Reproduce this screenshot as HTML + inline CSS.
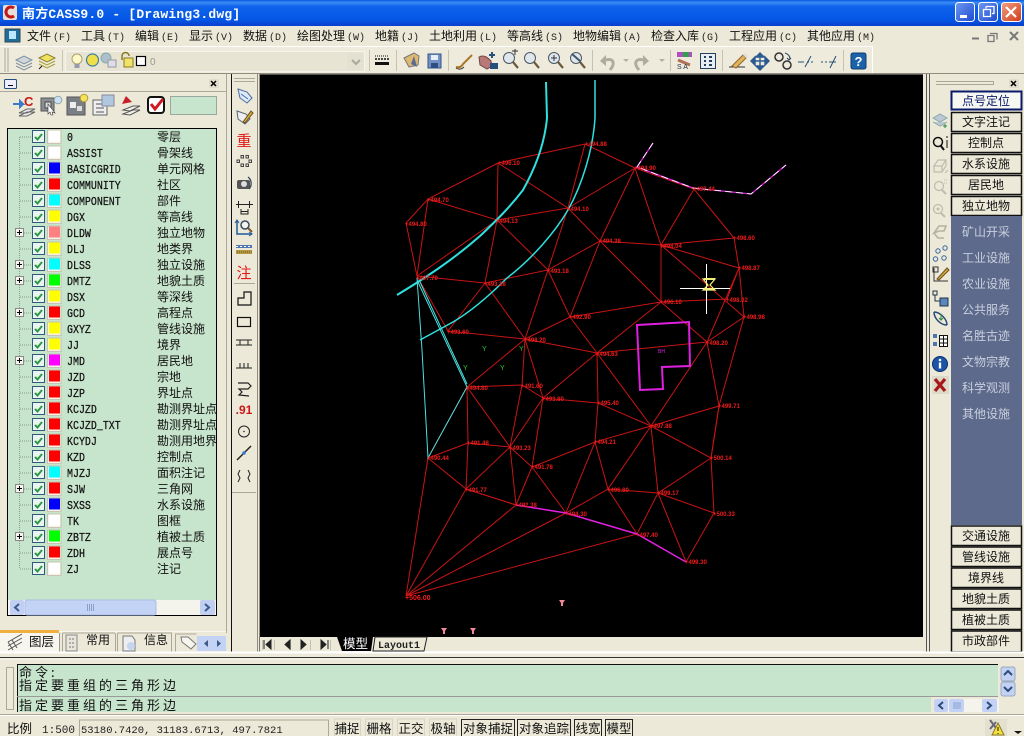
<!DOCTYPE html>
<html><head><meta charset="utf-8"><title>南方CASS9.0</title>
<style>
html,body{margin:0;padding:0;background:#ece9d8;overflow:hidden}
svg{display:block}
text{font-family:"Liberation Sans","WenQuanYi Zen Hei","Noto Sans CJK SC",sans-serif;white-space:pre}
.cj{font-family:"Liberation Mono","WenQuanYi Zen Hei","Noto Sans CJK SC",monospace;font-size:12px;fill:#111}
.mono{font-family:"Liberation Mono","Noto Sans CJK SC",monospace;font-size:12px;fill:#111;stroke:#111;stroke-width:.25}
.m{font-family:"Liberation Mono","WenQuanYi Zen Hei","Noto Sans CJK SC",monospace;font-size:12px;fill:#111}
.b{font-family:"WenQuanYi Zen Hei","Noto Sans CJK SC",sans-serif;font-size:12px;fill:#111;text-anchor:middle}
.w{font-family:"WenQuanYi Zen Hei","Noto Sans CJK SC",sans-serif;font-size:12px;fill:#c9cfdd;text-anchor:middle}
.s{font-family:"WenQuanYi Zen Hei","Noto Sans CJK SC",sans-serif;font-size:12.5px;fill:#111;text-anchor:middle}
.l{font-size:6px;font-weight:bold;fill:#f01c1c}
.cmd{font-family:"WenQuanYi Zen Hei","Noto Sans CJK SC",sans-serif;font-size:13px;letter-spacing:3px;fill:#111}
.r{stroke:#c81414;stroke-width:1;fill:none}
</style></head><body>
<svg width="1024" height="736" viewBox="0 0 1024 736" xmlns="http://www.w3.org/2000/svg">
<defs>
<linearGradient id="tb" x1="0" y1="0" x2="0" y2="1"><stop offset="0" stop-color="#0a58e0"/><stop offset=".1" stop-color="#3a8cf6"/><stop offset=".25" stop-color="#0f62ea"/><stop offset=".75" stop-color="#0457e6"/><stop offset="1" stop-color="#0a3fcc"/></linearGradient>
<linearGradient id="wb" x1="0" y1="0" x2="1" y2="1"><stop offset="0" stop-color="#6f9af0"/><stop offset="1" stop-color="#1c49cf"/></linearGradient>
<linearGradient id="wc" x1="0" y1="0" x2="1" y2="1"><stop offset="0" stop-color="#f0a080"/><stop offset="1" stop-color="#d03a18"/></linearGradient>
<clipPath id="tc"><rect x="9" y="129" width="207" height="470"/></clipPath>
<clipPath id="mc"><rect x="260" y="75" width="663" height="562"/></clipPath>
<g id="c"><rect x="32.5" y="-6.5" width="12" height="12" fill="#eaf5ef" stroke="#2c5c7c"/><path d="M35 0l2.5 2.5 4.5-5.5" fill="none" stroke="#2f9a45" stroke-width="2"/><rect x="47.5" y="-7" width="13.5" height="13.5" fill="#f4f2ea" stroke="#c9c3b0"/></g>
<g id="pl"><rect x="15.5" y="-4.5" width="8" height="8" fill="#f5f4ee" stroke="#8a8a8a"/><path d="M17 -.5h5M19.500 -3v5" stroke="#000"/></g>
</defs>

<!-- title bar -->
<rect width="1024" height="26" fill="url(#tb)"/>
<rect x="3" y="5" width="14" height="15" rx="2" fill="#e8e0d8"/><path d="M14 8a5 5 0 1 0 0 8" fill="none" stroke="#c01818" stroke-width="3"/>
<text x="22" y="18" style="font-family:'Liberation Mono','WenQuanYi Zen Hei','Noto Sans CJK SC',monospace;font-size:13px;font-weight:bold;fill:#fff;letter-spacing:.2px">南方CASS9.0 - [Drawing3.dwg]</text>
<rect x="955.500" y="2.500" width="19" height="19" rx="3" fill="url(#wb)" stroke="#fff"/><rect x="960" y="15" width="7" height="3" fill="#fff"/>
<rect x="978.500" y="2.500" width="19" height="19" rx="3" fill="url(#wb)" stroke="#fff"/><path d="M986 6.500h8v7h-2M986 6.500v2M983.500 9.500h7v7h-7z" fill="none" stroke="#fff" stroke-width="1.300"/>
<rect x="1001.500" y="2.500" width="20" height="19" rx="3" fill="url(#wc)" stroke="#fff"/><path d="M1006 7l10 10M1016 7l-10 10" stroke="#fff" stroke-width="2.200"/>

<!-- menu -->
<rect y="26" width="1024" height="20" fill="#ece9d8"/>
<rect x="5" y="29" width="15" height="13" fill="#1d6f9a" stroke="#345"/><rect x="9" y="31" width="7" height="8" fill="#bfe8ff"/>
<text class="m" y="40"><tspan x="27">文件</tspan><tspan x="81">工具</tspan><tspan x="135">编辑</tspan><tspan x="189">显示</tspan><tspan x="243">数据</tspan><tspan x="297">绘图处理</tspan><tspan x="375">地籍</tspan><tspan x="429">土地利用</tspan><tspan x="507">等高线</tspan><tspan x="573">地物编辑</tspan><tspan x="651">检查入库</tspan><tspan x="729">工程应用</tspan><tspan x="807">其他应用</tspan></text>
<text y="40" style="font-family:'Liberation Mono',monospace;font-size:10px;fill:#222"><tspan x="53">(F)</tspan><tspan x="107">(T)</tspan><tspan x="161">(E)</tspan><tspan x="215">(V)</tspan><tspan x="269">(D)</tspan><tspan x="347">(W)</tspan><tspan x="401">(J)</tspan><tspan x="479">(L)</tspan><tspan x="545">(S)</tspan><tspan x="623">(A)</tspan><tspan x="701">(G)</tspan><tspan x="779">(C)</tspan><tspan x="857">(M)</tspan></text>
<path d="M972 38.500h7" stroke="#777" stroke-width="2"/><path d="M990 33.500h7v6M988 35.500h6v6h-6z" fill="none" stroke="#777" stroke-width="1.300"/><path d="M1010 32l8 8M1018 32l-8 8" stroke="#777" stroke-width="2"/>

<!-- toolbar -->
<rect y="46" width="1024" height="28" fill="#ece9d8"/>
<rect y="46" width="873" height="27" fill="#eeebdc"/>
<path d="M0 46.500h873M872.500 46v27" stroke="#fff"/>
<path d="M0 73.500h1024" stroke="#8f8c7e"/>
<path d="M5 48v24M8 48v24" stroke="#aca899" stroke-width="1"/>
<g fill="none" stroke="#7f8f9f"><path d="M16 60l8-4 8 4-8 4z" fill="#cfd6dc"/><path d="M16 63l8 4 8-4M16 66l8 4 8-4"/></g>
<g fill="none" stroke="#8a8030"><path d="M39 58l8-4 8 4-8 4z" fill="#f0e25c"/><path d="M39 61l8 4 8-4M39 64l8 4 8-4" stroke="#a89d30"/></g><path d="M39 69l3-3" stroke="#111"/>
<path d="M62.500 50v21" stroke="#c9c6b4"/>
<rect x="65.500" y="51.500" width="299" height="20" fill="#e7e4d3" stroke="#f5f3ea"/>
<circle cx="77" cy="59" r="5" fill="#fff9c8" stroke="#aaa070"/><rect x="74.500" y="64" width="5" height="4" fill="#99a"/>
<circle cx="92.500" cy="60" r="6" fill="#efe04a" stroke="#3d7fa0" stroke-width="1.200"/>
<circle cx="106" cy="58" r="5" fill="#aebecc" stroke="#8aa"/><rect x="108" y="60" width="8" height="7" fill="#dde" stroke="#999"/>
<path d="M122 60v-4a3.500 3.500 0 0 1 7 0" fill="none" stroke="#8a7a20" stroke-width="1.500"/><rect x="124" y="58" width="9" height="9" fill="#efe36a" stroke="#8a7a20"/>
<rect x="136.500" y="56.500" width="9" height="9" fill="#fff" stroke="#000" stroke-width="1.200"/>
<text x="150" y="65" style="font-size:10px;fill:#9a9888">0</text>
<rect x="347" y="53" width="17" height="17" fill="#e3e1d2"/><path d="M352 60l4 4 4-4" fill="none" stroke="#a9a89a" stroke-width="2"/>
<path d="M369.500 50v21M396.500 50v21M448.500 50v21M592.500 50v21M670.500 50v21M722.500 50v21M843.500 50v21" stroke="#c5c2b0"/>
<path d="M375 56h14" stroke="#111" stroke-dasharray="1 1" stroke-width="1"/><path d="M375 59h14" stroke="#111" stroke-width="1.500" stroke-dasharray="2 1"/><path d="M375 63.500h14" stroke="#111" stroke-width="3"/>
<path d="M404 58l10-5 5 3-1 9-9 2z" fill="#dcb870" stroke="#777"/><path d="M414 56l-3 8 6 3z" fill="#5a6d90"/>
<rect x="428" y="54" width="13" height="14" fill="#7391c5" stroke="#33568a"/><rect x="431" y="55" width="7" height="5" fill="#e8eef8"/><rect x="431" y="63" width="7" height="5" fill="#2f4f80"/>
<path d="M456 67c4 1 6-1 7-3l9-9" fill="none" stroke="#a87828" stroke-width="2"/><path d="M456 68c3 2 6 1 8-1" fill="none" stroke="#333"/>
<path d="M479 57c5-3 9 1 12 4l1 5-5 3-7-4z" fill="#b87a78" stroke="#744"/><path d="M492 52v6M489 55h6" stroke="#24507a" stroke-width="2"/><rect x="490" y="63" width="8" height="6" fill="#24507a"/>
<g fill="#dfe6ec" stroke="#4c5866"><circle cx="509" cy="58" r="5.500"/><circle cx="530" cy="58" r="5.500"/><circle cx="554" cy="58" r="5.500"/><circle cx="576" cy="58" r="5.500"/></g>
<path d="M513 62l5 6M534 62l5 6M558 62l5 6M580 62l5 6" stroke="#6a5a3a" stroke-width="2.200"/>
<path d="M512 51h6M515 49v6" stroke="#333"/><path d="M551 58h6M554 55v6" stroke="#334"/><path d="M572 54l8 7" stroke="#456" stroke-width="2"/>
<path d="M606 60C613 58 616 63 610 70" fill="none" stroke="#aeac9e" stroke-width="3"/><path d="M600 61l6-6v11z" fill="#aeac9e"/><path d="M623 59h6l-3 3z" fill="#b2b0a2"/>
<path d="M643 60C636 58 633 63 639 70" fill="none" stroke="#aeac9e" stroke-width="3"/><path d="M649 61l-6-6v11z" fill="#aeac9e"/><path d="M659 59h6l-3 3z" fill="#b2b0a2"/>
<rect x="677" y="52" width="15" height="5" fill="#b050c0"/><rect x="683" y="52" width="6" height="5" fill="#30a050"/><path d="M678 60l12 5" stroke="#b0705a" stroke-width="3"/><text x="677" y="69" style="font-size:7px;fill:#234">S A</text>
<rect x="700.500" y="53.500" width="15" height="15" fill="#e9edf2" stroke="#24405f"/><path d="M704 57h2M709 57h3M704 61h2M709 61h3M704 65h2M709 65h3" stroke="#24405f" stroke-width="2"/>
<path d="M729 67h16" stroke="#333"/><path d="M732 66l11-11 3 3-10 10z" fill="#e7b15c" stroke="#8a6a2c"/><path d="M743 55l2-2 3 3-2 2z" fill="#ddd"/>
<path d="M760 53l4 4h-8zM760 70l-4-4h8zM751 61l4-4v8zM769 61l-4-4v8zM755 61h10M760 56v10" fill="#2c5b92" stroke="#2c5b92" stroke-width="1.400"/>
<circle cx="779" cy="57" r="4" fill="none" stroke="#333" stroke-width="1.500"/><circle cx="787" cy="65" r="4" fill="none" stroke="#333" stroke-width="1.500"/><path d="M785 53c3 1 5 3 5 6M791 58l-2 2-2-2" fill="none" stroke="#246"/>
<path d="M798 62h6M807 62h2M811 62h2M805 67l6-11" stroke="#27507a"/><path d="M821 62h2M825 62h2M829 62h7M830 68l6-12" stroke="#27507a"/>
<rect x="851" y="53" width="15" height="16" rx="2" fill="#1c62a8" stroke="#0f3c70"/><text x="858.500" y="66" style="font-size:13px;font-weight:bold;fill:#fff;text-anchor:middle">?</text>

<!-- left panel -->
<rect y="74" width="231" height="578" fill="#ece9d8"/>
<path d="M226.500 74v559" stroke="#aca899"/><path d="M231.500 74v578" stroke="#111"/><path d="M0 91.500h226" stroke="#aca899"/>
<rect x="4.500" y="79.500" width="12" height="9" rx="1" fill="#eef" stroke="#24507a"/><path d="M8 85.500h5" stroke="#000"/>
<rect x="209" y="79" width="10" height="9" fill="#e0ddcd"/><path d="M211 81l5 5M216 81l-5 5" stroke="#000" stroke-width="1.500"/>
<path d="M13 104h10l-3-3v6l3-3" stroke="#3a7ac8" stroke-width="2" fill="none"/><text x="24" y="106" style="font-size:13px;font-weight:bold;fill:#c81818">C</text><path d="M19 113l8-4h8l-8 4z M19 116l8-4h8l-8 4z" fill="#eee" stroke="#666"/>
<rect x="41" y="98" width="13" height="13" fill="#8a8f96" stroke="#555"/><rect x="45" y="102" width="6" height="6" fill="#ddd" stroke="#444"/><path d="M48 104l7 9-3-1 1 3-2 0-1-3-2 2z" fill="#fff" stroke="#333" stroke-width=".6"/><circle cx="58" cy="100" r="3.800" fill="#cfe0f6" stroke="#8aa"/>
<rect x="67" y="97" width="18" height="18" fill="#7a7f86" stroke="#555"/><rect x="70" y="102" width="6" height="6" fill="#eee"/><rect x="77" y="106" width="5" height="5" fill="#ddd"/><circle cx="84" cy="98" r="3.800" fill="#f2e35a" stroke="#b09a30"/>
<rect x="93" y="100" width="14" height="15" fill="#eee" stroke="#666"/><path d="M96 104h8M96 108h8M96 112h8" stroke="#555"/><rect x="102" y="95" width="12" height="11" fill="#b0c8df" stroke="#889"/>
<path d="M122 104l4-8 6 6z" fill="#c8202a"/><path d="M123 110l10-4h7l-10 5zM123 114l10-4h7l-10 5z" fill="#f2f2ea" stroke="#555"/>
<rect x="148" y="97" width="16" height="16" rx="3" fill="#fff" stroke="#111" stroke-width="2"/><path d="M151 104l4 5 8-10" fill="none" stroke="#d01822" stroke-width="3"/>
<rect x="170.500" y="96.500" width="46" height="18" fill="#c7e4cc" stroke="#9aa89e"/>

<!-- tree -->
<rect x="7.500" y="128.500" width="209" height="487" fill="#c7e4cc" stroke="#000"/>
<path d="M19.500 137v432" stroke="#8e9c90" stroke-dasharray="1 1"/>
<g stroke="#8e9c90" stroke-dasharray="1 1"><path d="M20 137h12M20 153h12M20 169h12M20 185h12M20 201h12M20 217h12M20 233h12M20 249h12M20 265h12M20 281h12M20 297h12M20 313h12M20 329h12M20 345h12M20 361h12M20 377h12M20 393h12M20 409h12M20 425h12M20 441h12M20 457h12M20 473h12M20 489h12M20 505h12M20 521h12M20 537h12M20 553h12M20 569h12"/></g>
<use href="#pl" y="233"/><use href="#pl" y="265"/><use href="#pl" y="281"/><use href="#pl" y="313"/><use href="#pl" y="361"/><use href="#pl" y="489"/><use href="#pl" y="537"/>
<use href="#c" y="137"/><use href="#c" y="153"/><use href="#c" y="169"/><use href="#c" y="185"/><use href="#c" y="201"/><use href="#c" y="217"/><use href="#c" y="233"/><use href="#c" y="249"/><use href="#c" y="265"/><use href="#c" y="281"/><use href="#c" y="297"/><use href="#c" y="313"/><use href="#c" y="329"/><use href="#c" y="345"/><use href="#c" y="361"/><use href="#c" y="377"/><use href="#c" y="393"/><use href="#c" y="409"/><use href="#c" y="425"/><use href="#c" y="441"/><use href="#c" y="457"/><use href="#c" y="473"/><use href="#c" y="489"/><use href="#c" y="505"/><use href="#c" y="521"/><use href="#c" y="537"/><use href="#c" y="553"/><use href="#c" y="569"/>
<g>
<rect x="49" y="130.500" width="11" height="11" fill="#fff"/><rect x="49" y="146.500" width="11" height="11" fill="#fff"/><rect x="49" y="162.500" width="11" height="11" fill="#0000ff"/><rect x="49" y="178.500" width="11" height="11" fill="#ff0000"/><rect x="49" y="194.500" width="11" height="11" fill="#00ffff"/><rect x="49" y="210.500" width="11" height="11" fill="#ffff00"/><rect x="49" y="226.500" width="11" height="11" fill="#ff8080"/><rect x="49" y="242.500" width="11" height="11" fill="#ffff00"/><rect x="49" y="258.500" width="11" height="11" fill="#00ffff"/><rect x="49" y="274.500" width="11" height="11" fill="#00ff00"/><rect x="49" y="290.500" width="11" height="11" fill="#ffff00"/><rect x="49" y="306.500" width="11" height="11" fill="#ff0000"/><rect x="49" y="322.500" width="11" height="11" fill="#ffff00"/><rect x="49" y="338.500" width="11" height="11" fill="#ffff00"/><rect x="49" y="354.500" width="11" height="11" fill="#ff00ff"/><rect x="49" y="370.500" width="11" height="11" fill="#ff0000"/><rect x="49" y="386.500" width="11" height="11" fill="#ff0000"/><rect x="49" y="402.500" width="11" height="11" fill="#ff0000"/><rect x="49" y="418.500" width="11" height="11" fill="#ff0000"/><rect x="49" y="434.500" width="11" height="11" fill="#ff0000"/><rect x="49" y="450.500" width="11" height="11" fill="#ff0000"/><rect x="49" y="466.500" width="11" height="11" fill="#00ffff"/><rect x="49" y="482.500" width="11" height="11" fill="#ff0000"/><rect x="49" y="498.500" width="11" height="11" fill="#0000ff"/><rect x="49" y="514.500" width="11" height="11" fill="#fff"/><rect x="49" y="530.500" width="11" height="11" fill="#00ff00"/><rect x="49" y="546.500" width="11" height="11" fill="#ff0000"/><rect x="49" y="562.500" width="11" height="11" fill="#fff"/>
</g>
<g clip-path="url(#tc)">
<g transform="translate(67,0) scale(.83,1)"><text class="mono"><tspan x="0" y="141">0</tspan><tspan x="0" y="157">ASSIST</tspan><tspan x="0" y="173">BASICGRID</tspan><tspan x="0" y="189">COMMUNITY</tspan><tspan x="0" y="205">COMPONENT</tspan><tspan x="0" y="221">DGX</tspan><tspan x="0" y="237">DLDW</tspan><tspan x="0" y="253">DLJ</tspan><tspan x="0" y="269">DLSS</tspan><tspan x="0" y="285">DMTZ</tspan><tspan x="0" y="301">DSX</tspan><tspan x="0" y="317">GCD</tspan><tspan x="0" y="333">GXYZ</tspan><tspan x="0" y="349">JJ</tspan><tspan x="0" y="365">JMD</tspan><tspan x="0" y="381">JZD</tspan><tspan x="0" y="397">JZP</tspan><tspan x="0" y="413">KCJZD</tspan><tspan x="0" y="429">KCJZD_TXT</tspan><tspan x="0" y="445">KCYDJ</tspan><tspan x="0" y="461">KZD</tspan><tspan x="0" y="477">MJZJ</tspan><tspan x="0" y="493">SJW</tspan><tspan x="0" y="509">SXSS</tspan><tspan x="0" y="525">TK</tspan><tspan x="0" y="541">ZBTZ</tspan><tspan x="0" y="557">ZDH</tspan><tspan x="0" y="573">ZJ</tspan></text></g>
<text class="cj"><tspan x="157" y="141">零层</tspan><tspan x="157" y="157">骨架线</tspan><tspan x="157" y="173">单元网格</tspan><tspan x="157" y="189">社区</tspan><tspan x="157" y="205">部件</tspan><tspan x="157" y="221">等高线</tspan><tspan x="157" y="237">独立地物</tspan><tspan x="157" y="253">地类界</tspan><tspan x="157" y="269">独立设施</tspan><tspan x="157" y="285">地貌土质</tspan><tspan x="157" y="301">等深线</tspan><tspan x="157" y="317">高程点</tspan><tspan x="157" y="333">管线设施</tspan><tspan x="157" y="349">境界</tspan><tspan x="157" y="365">居民地</tspan><tspan x="157" y="381">宗地</tspan><tspan x="157" y="397">界址点</tspan><tspan x="157" y="413">勘测界址点</tspan><tspan x="157" y="429">勘测界址点</tspan><tspan x="157" y="445">勘测用地界</tspan><tspan x="157" y="461">控制点</tspan><tspan x="157" y="477">面积注记</tspan><tspan x="157" y="493">三角网</tspan><tspan x="157" y="509">水系设施</tspan><tspan x="157" y="525">图框</tspan><tspan x="157" y="541">植被土质</tspan><tspan x="157" y="557">展点号</tspan><tspan x="157" y="573">注记</tspan></text>
</g>
<!-- tree scrollbar -->
<rect x="8" y="600" width="208" height="15" fill="#f4f3ec"/>
<rect x="10" y="600" width="14" height="15" rx="2" fill="#c0cff2"/><path d="M19 604l-4 3.500 4 3.500" fill="none" stroke="#3c5a8a" stroke-width="2"/>
<rect x="25" y="600" width="131" height="15" rx="2" fill="#c3d3f5" stroke="#a8bce6"/><path d="M87.500 604v7M89.500 604v7M91.500 604v7M93.500 604v7" stroke="#8aa0cc"/>
<rect x="200" y="600" width="15" height="15" rx="2" fill="#c0cff2"/><path d="M205 604l4 3.500-4 3.500" fill="none" stroke="#3c5a8a" stroke-width="2"/>

<!-- panel tabs -->
<path d="M0 631.500h226" stroke="#f8f7f0"/>
<rect x="0" y="631" width="59" height="21" fill="#f7f6ee"/><rect x="0" y="630" width="59" height="3" fill="#f0b040"/><path d="M59.500 633v19" stroke="#999"/>
<path d="M8 650l14-8M8 646l14-8M8 642l14-8M8 642l5 8M12 640l5 8" stroke="#555" fill="none"/>
<text class="cj" x="29" y="646" style="font-size:12.500px">图层</text>
<path d="M62.500 652v-18q0-1 1-1h50q2 0 2 2v17M117.500 652v-18q0-1 1-1h53v19" fill="none" stroke="#aca899"/>
<rect x="66" y="635" width="11" height="16" fill="#e8e6da" stroke="#888"/><path d="M69 639h5M69 643h5M69 647h5" stroke="#777" stroke-dasharray="2 1"/>
<text class="cj" x="86" y="644">常用</text>
<path d="M123 636h9l3 4v11h-12z" fill="#eee" stroke="#777"/><circle cx="131" cy="646" r="4" fill="#c6d4ee"/>
<text class="cj" x="144" y="644">信息</text>
<path d="M175.500 652v-18h21" fill="none" stroke="#aca899"/>
<path d="M181 637l7 0 8 7-5 5-9-7z" fill="#f6f5ee" stroke="#777"/>
<rect x="197" y="636" width="29" height="15" fill="#c4d2f3"/><path d="M208 640l-4 3.500 4 3.500z" fill="#3c5a8a"/><path d="M217 640l4 3.500-4 3.500z" fill="#3c5a8a"/>

<!-- left tool strip -->
<rect x="232" y="74" width="24" height="419" fill="#ece9d8"/>
<path d="M234 78.500h21M234 81.500h21M256.500 74v419M232 492.500h25" stroke="#aca899"/>
<rect x="256" y="74" width="4" height="564" fill="#ece9d8"/><path d="M257.500 74v578M259.500 74v578" stroke="#8f8c7e"/>
<path d="M238 89l9 3 5 6-5 5-7-5z" fill="#dfe9f6" stroke="#4c6e9c"/><path d="M241 94l7 5" stroke="#3a74b8"/>
<path d="M237 111l9 3 4 5-5 5-7-5z" fill="#eee" stroke="#567"/><path d="M243 122l8-11 2 2-8 10z" fill="#d8a83c" stroke="#6a5020"/>
<text x="244" y="146" style="font-family:'WenQuanYi Zen Hei','Noto Sans CJK SC',sans-serif;font-size:15px;fill:#e01818;text-anchor:middle">重</text>
<g fill="none" stroke="#444"><rect x="241" y="155.500" width="2.500" height="2.500"/><rect x="246" y="155.500" width="2.500" height="2.500"/><rect x="237" y="160" width="2.500" height="2.500"/><rect x="249" y="160" width="2.500" height="2.500"/><rect x="241" y="164" width="2.500" height="2.500"/><rect x="246" y="164" width="2.500" height="2.500"/></g>
<rect x="237" y="180" width="13" height="9" rx="2" fill="#555"/><circle cx="244" cy="184" r="3" fill="#ddd"/><path d="M248 177c4 3 4 9 1 12" fill="none" stroke="#345" stroke-width="1.300"/>
<path d="M236 204.500h17M238.500 201v7M249.500 201v7M241 209v5h7v-5M241 211.500h7" fill="none" stroke="#222"/>
<path d="M237 220v14h15" fill="none" stroke="#1f5a9a" stroke-width="1.500"/><path d="M235 223l2-3 2 3M249 232l3 2-3 2" stroke="#1f5a9a" fill="none"/><circle cx="245" cy="225" r="4" fill="#f5f4ea" stroke="#3a4b63" stroke-width="1.500"/><path d="M248 228l4 4" stroke="#7a5a2c" stroke-width="2"/>
<rect x="236" y="245" width="16" height="3" fill="#2c5aa6" opacity=".8"/><path d="M236 246.500h16" stroke="#fff" stroke-dasharray="2 2"/><rect x="236" y="250" width="16" height="4" fill="#b89a3c"/><path d="M237 252h15" stroke="#554" stroke-dasharray="1 1"/>
<text x="244" y="278" style="font-family:'WenQuanYi Zen Hei','Noto Sans CJK SC',sans-serif;font-size:15px;fill:#e01818;text-anchor:middle">注</text>
<path d="M234 283.500h21" stroke="#aca899"/>
<path d="M238 305v-7h6v-6h7v13z" fill="none" stroke="#111" stroke-width="1.200"/>
<rect x="237.500" y="317.500" width="13" height="9" fill="none" stroke="#111" stroke-width="1.200"/>
<path d="M236 340h16M236 345h16M240 340v5M248 340v5" fill="none" stroke="#222"/>
<path d="M236 368h16M240 363v5M248 363v5M244 363v5" fill="none" stroke="#222"/>
<path d="M238 383h10l3 3-3 3h-9l3 3-3 3 10 1" fill="none" stroke="#222" stroke-width="1.200"/>
<text x="244" y="414" style="font-size:12px;font-weight:bold;fill:#c81818;text-anchor:middle">.91</text>
<circle cx="244" cy="431.500" r="5.500" fill="none" stroke="#222"/><circle cx="244" cy="431.500" r=".8" fill="#222"/>
<path d="M237 460l14-14" stroke="#222" stroke-width="1.500"/><circle cx="244" cy="453" r="1.800" fill="#3a7ac8"/>
<path d="M240 470l-2 4 2 4-2 4M248 470l2 4-2 4 2 4" fill="none" stroke="#222"/>

<!-- canvas -->
<rect x="260" y="75" width="663" height="562" fill="#000"/>
<path d="M260 74.500h663" stroke="#555"/>
<g clip-path="url(#mc)">
<g class="r">
<path d="M406 223L428 199L498 163L585 144L635 168L694 189L734 238L739 268L744 317L719 406L711 458L714 513L686 562L637 534L566 513L516 505L466 489"/>
<path d="M406 223L417 276L428 199M428 199L497 220L498 163M497 220L417 276M417 276L485 283L497 220L568 208L498 163M568 208L585 144M497 220L548 270L485 283M568 208L548 270L600 241L568 208M568 208L635 168L600 241L570 317L548 270M485 283L448 331L525 339L485 283M548 270L525 339L570 317L597 353L525 339M448 331L417 276"/>
<path d="M635 168L661 245L694 189M600 241L661 245L734 238M661 245L739 268M661 245L661 302L600 241M661 245L744 317M570 317L661 302L727 299L739 268M661 302L707 342L597 353L661 302M739 268L707 342L744 317M707 342L719 406M707 342L651 426M597 353L651 426"/>
<path d="M525 339L467 387L522 385L525 339L543 398L522 385L510 447L467 387L468 443L510 447L543 398L532 467L510 447L466 489L468 443L428 458L467 387M543 398L597 353M543 398L598 403L651 426L595 442L598 403L597 353M428 458L466 489L516 505L510 447M516 505L532 467L566 513L595 442L532 467M566 513L608 489L595 442M651 426L719 406L711 458L651 426L658 493L711 458M651 426L608 489L658 493L714 513M608 489L637 534L658 493L686 562"/>
<path d="M428 458L406 596L466 489M406 596L516 505M406 596L566 513M406 596L637 534"/>
</g>
<g fill="none">
<path d="M546 82L547 118C545 140 537 165 523 190C510 207 497 220 480 236C455 258 430 275 397 295" stroke="#30e0e0" stroke-width="2"/>
<path d="M595 80L595 118C593 150 582 185 568 210C555 232 533 258 507 278C490 295 470 312 453 322L420 340" stroke="#30e0e0" stroke-width="1.500"/>
<path d="M417 278L422 350L428 458L467 387L417 280M420 282L467 384" stroke="#4ae0e0" stroke-width="1"/>
<path d="M653 143L637 167L693 188L751 194L786 165" stroke="#e020e0" stroke-width="1.300"/>
<path d="M653 143L637 167L693 188L751 194L786 165" stroke="#ffffff" stroke-width=".9" stroke-dasharray="7 4"/>
<path d="M516 505L566 513L637 534L686 562" stroke="#e020e0" stroke-width="1.500"/>
<path d="M637 325L689 322L690 366L662 367L663 389L640 390Z" stroke="#e020e0" stroke-width="2"/>
</g>
<text x="658" y="353" style="font-size:5px;fill:#e020e0">BH</text>
<g style="font-size:7px;fill:#2ecc2e"><text x="463" y="370">Y</text><text x="482" y="351">Y</text><text x="500" y="370">Y</text><text x="519" y="351">Y</text></g>
<g class="l">
<text x="405" y="226">+494.80</text><text x="427" y="202">+494.70</text><text x="498" y="165">+496.10</text><text x="585" y="146">+494.88</text><text x="496" y="223">+494.13</text><text x="567" y="211">+494.10</text><text x="416" y="280">+497.70</text><text x="484" y="286">+493.28</text><text x="547" y="273">+493.18</text><text x="599" y="243">+494.38</text><text x="569" y="319">+492.90</text><text x="447" y="334">+493.60</text><text x="524" y="342">+498.20</text><text x="596" y="356">+494.63</text>
<text x="634" y="170">+494.90</text><text x="693" y="191">+497.44</text><text x="660" y="248">+498.04</text><text x="733" y="240">+498.60</text><text x="738" y="270">+498.87</text><text x="726" y="302">+498.02</text><text x="743" y="319">+498.98</text><text x="660" y="304">+496.10</text><text x="706" y="345">+498.20</text>
<text x="466" y="390">+494.80</text><text x="521" y="388">+491.60</text><text x="542" y="401">+493.80</text><text x="467" y="445">+491.48</text><text x="509" y="450">+493.23</text><text x="531" y="469">+491.78</text><text x="427" y="460">+490.44</text><text x="465" y="492">+491.77</text><text x="515" y="507">+492.38</text><text x="565" y="516">+494.30</text>
<text x="597" y="405">+495.40</text><text x="594" y="444">+494.21</text><text x="650" y="428">+497.88</text><text x="718" y="408">+499.71</text><text x="710" y="460">+500.14</text><text x="607" y="492">+496.80</text><text x="657" y="495">+499.17</text><text x="713" y="516">+500.33</text><text x="636" y="537">+497.40</text><text x="685" y="564">+499.30</text>
<text x="405" y="600" style="font-size:7px">+506.00</text>
</g>
<path d="M441 628h6l-2 3v3h-2v-3zM470 628h6l-2 3v3h-2v-3zM559 600h6l-2 3v3h-2v-3z" fill="#f08a9a"/>
<path d="M680 288.500h50M706.500 264v50" stroke="#fff" stroke-width="1"/>
<path d="M703 279h12l-5 6 5 5h-12l5-5z" fill="none" stroke="#f2f07a" stroke-width="1.200"/><path d="M704 278h11v2h-11zM704 288h11v2h-11z" fill="#f2f07a"/>
</g>

<!-- sheet tabs -->
<rect x="260" y="637" width="666" height="15" fill="#ece9d8"/>
<path d="M259.500 637v15" stroke="#777"/><path d="M262 651.500h720" stroke="#f8f7f0"/>
<path d="M262.500 640v10M274.500 640v10M290.500 640v10M310.500 640v10M330.500 640v10" stroke="#c5c2b0"/>
<path d="M264 640v9M271 640v9l-5-4.500zM290 640v9l-5-4.500zM301 640v9l5-4.500zM321 640v9l5-4.500zM328 640v9" stroke="#222" fill="#222"/>
<path d="M337 637l5 14h29l2-14z" fill="#000"/><text x="343" y="648" class="b" style="text-anchor:start;fill:#fff;font-size:12.500px">模型</text>
<path d="M373 651l2-14h52l-3 14z" fill="#ece9d8" stroke="#222"/><text x="378" y="648" style="font-family:'Liberation Mono',monospace;font-size:10px;font-weight:bold;fill:#222">Layout1</text>

<!-- right panel -->
<rect x="923" y="74" width="101" height="578" fill="#ece9d8"/>
<path d="M926.500 74v578M929.500 74v578" stroke="#555"/>
<path d="M936 81.500h57M936 84.500h57M993.500 81v4" stroke="#aca899"/>
<rect x="1009" y="79" width="10" height="9" fill="#e0ddcd"/><path d="M1011 81l5 5M1016 81l-5 5" stroke="#000" stroke-width="1.500"/>
<rect x="951.500" y="91.500" width="70" height="18" fill="#f7f7f2" stroke="#0a1a6a" stroke-width="2"/>
<g fill="#ece9d8" stroke="#111" stroke-width="1.500"><rect x="951.500" y="112.500" width="70" height="19"/><rect x="951.500" y="133.500" width="70" height="19"/><rect x="951.500" y="154.500" width="70" height="19"/><rect x="951.500" y="175.500" width="70" height="19"/><rect x="951.500" y="196.500" width="70" height="19"/></g>
<rect x="951" y="216" width="71" height="309" fill="#5d6a8c"/>
<g fill="#ece9d8" stroke="#111" stroke-width="1.500"><rect x="951.500" y="526" width="70" height="19.500"/><rect x="951.500" y="547" width="70" height="19.500"/><rect x="951.500" y="568" width="70" height="19.500"/><rect x="951.500" y="589" width="70" height="19.500"/><rect x="951.500" y="610" width="70" height="19.500"/><rect x="951.500" y="631" width="70" height="21"/></g>
<text class="b" x="986" y="105" style="fill:#0a1a6a">点号定位</text>
<g class="b"><text class="b" x="986" y="126">文字注记</text><text class="b" x="986" y="147">控制点</text><text class="b" x="986" y="168">水系设施</text><text class="b" x="986" y="189">居民地</text><text class="b" x="986" y="210">独立地物</text>
<text class="b" x="986" y="540">交通设施</text><text class="b" x="986" y="561">管线设施</text><text class="b" x="986" y="582">境界线</text><text class="b" x="986" y="603">地貌土质</text><text class="b" x="986" y="624">植被土质</text><text class="b" x="986" y="645">市政部件</text></g>
<text class="w" x="986" y="236">矿山开采</text><text class="w" x="986" y="262">工业设施</text><text class="w" x="986" y="288">农业设施</text><text class="w" x="986" y="314">公共服务</text><text class="w" x="986" y="340">名胜古迹</text><text class="w" x="986" y="366">文物宗教</text><text class="w" x="986" y="392">科学观测</text><text class="w" x="986" y="418">其他设施</text>
<!-- right icons -->
<path d="M933 118l7-4 7 4-7 4zM933 122l7 4 7-4" fill="#bcc8d4" stroke="#8aa"/><path d="M945 124v4M943 126h4" stroke="#2a8a3a"/>
<circle cx="938" cy="142" r="4.500" fill="none" stroke="#111" stroke-width="1.500"/><path d="M941 146l3 4" stroke="#111" stroke-width="2"/><path d="M947 140v8M946 137h2" stroke="#111"/>
<path d="M934 166l4-6h8l-4 6zM934 166v6h8v-6M942 172l4-6v-6M948 170l-3 3" fill="none" stroke="#c0bdae" stroke-width="1.200"/>
<circle cx="939" cy="186" r="4.500" fill="none" stroke="#c0bdae" stroke-width="1.300"/><path d="M942 190l4 4" stroke="#c0bdae" stroke-width="2"/><path d="M944 180h4M944 183h4" stroke="#c0bdae" stroke-dasharray="1 1"/>
<circle cx="938" cy="209" r="4.500" fill="none" stroke="#c0bdae" stroke-width="1.300"/><circle cx="938" cy="209" r="1.500" fill="#c0bdae"/><path d="M941 213l4 4" stroke="#c0bdae" stroke-width="2"/>
<path d="M934 233l5-7h7l-2 5h-5zM934 233l4 5h6" fill="none" stroke="#b5b2a3" stroke-width="1.600"/>
<g fill="none" stroke="#3465a4"><circle cx="935.500" cy="259" r="2.200"/><circle cx="944" cy="258" r="2.200"/><circle cx="938" cy="251" r="2.200"/><circle cx="945" cy="248" r="2.200"/></g>
<path d="M934 268v13h14" stroke="#333" fill="none"/><path d="M937 279l10-11 2 2-10 10z" fill="#d8a83c" stroke="#6a5020"/><rect x="933" y="267" width="5" height="5" fill="none" stroke="#333"/>
<rect x="933" y="291" width="4" height="4" fill="none" stroke="#234"/><path d="M935 295v6h5" stroke="#234" fill="none"/><rect x="940" y="298" width="8" height="8" fill="#5a86c0" stroke="#234"/>
<path d="M934 312c6 0 13 7 13 13M934 312c0 6 6 13 13 13" fill="none" stroke="#2a4a78" stroke-width="1.500"/><path d="M941 314v6l-2-2M941 320l2-2" stroke="#2a8a3a" fill="none"/>
<rect x="933" y="334" width="4" height="4" fill="#4a76b0"/><rect x="933" y="342" width="4" height="4" fill="#4a76b0"/><rect x="939.500" y="335.500" width="8" height="11" fill="#fff" stroke="#111"/><path d="M939 339h9M939 343h9M943.500 335v11" stroke="#111"/>
<circle cx="940" cy="364" r="7.500" fill="#1c55a8" stroke="#0c2e6e"/><circle cx="940" cy="360" r="1.300" fill="#fff"/><path d="M940 362.500v6" stroke="#fff" stroke-width="2.300"/>
<rect x="932" y="376" width="17" height="18" fill="#dcd9c9"/><path d="M935 379l10 12M945 379l-10 12" stroke="#a81818" stroke-width="3.200"/>

<!-- command -->
<rect y="652" width="1024" height="63" fill="#ece9d8"/>
<path d="M0 652.500h1024" stroke="#fff" stroke-width="2"/>
<path d="M0 657.500h1024" stroke="#333"/><path d="M0 659h1024" stroke="#f8f7f0"/>
<rect x="6.500" y="667.500" width="7" height="42" fill="#ece9d8" stroke="#aca899"/>
<rect x="17" y="664.500" width="981" height="32" fill="#c7e4cc"/>
<rect x="17" y="697" width="914" height="15" fill="#c7e4cc"/>
<path d="M17 664.500h981" stroke="#111"/><path d="M17.500 664v48" stroke="#111"/><path d="M17 696.500h981" stroke="#999"/>
<text class="cmd" x="19" y="677">命令:</text>
<text class="cmd" x="19" y="690">指定要重组的三角形边</text>
<text class="cmd" x="19" y="710">指定要重组的三角形边</text>
<rect x="1001" y="667" width="14" height="14" rx="2" fill="#c3d2f4" stroke="#9ab"/><path d="M1004 675l4-4 4 4" fill="none" stroke="#2c4a7a" stroke-width="2"/>
<rect x="1001" y="682" width="14" height="14" rx="2" fill="#c3d2f4" stroke="#9ab"/><path d="M1004 687l4 4 4-4" fill="none" stroke="#2c4a7a" stroke-width="2"/>
<rect x="934" y="699" width="65" height="13" fill="#f4f3ec"/>
<rect x="934" y="699" width="14" height="13" rx="2" fill="#c3d2f4"/><path d="M943 702l-4 3.500 4 3.500" fill="none" stroke="#2c4a7a" stroke-width="2"/>
<rect x="949" y="699" width="15" height="13" rx="2" fill="#c3d2f4"/><path d="M954 702v7M956 702v7M958 702v7M960 702v7" stroke="#8aa0cc"/>
<rect x="982" y="699" width="15" height="13" rx="2" fill="#c3d2f4"/><path d="M987 702l4 3.500-4 3.500" fill="none" stroke="#2c4a7a" stroke-width="2"/>

<!-- status -->
<rect y="715" width="1024" height="21" fill="#ece9d8"/>
<path d="M0 714.500h1024" stroke="#aca899"/><path d="M0 715.500h1024" stroke="#fff"/>
<text x="7" y="733" class="s" style="text-anchor:start">比例</text>
<text x="42" y="733" style="font-family:'Liberation Mono',monospace;font-size:11px;fill:#222">1:500</text>
<path d="M79.500 736v-16h249v16" fill="none" stroke="#aca899"/>
<text x="81" y="733" style="font-family:'Liberation Mono',monospace;font-size:10.500px;fill:#222">53180.7420, 31183.6713, 497.7821</text>
<g fill="#ece9d8" stroke="#d8d5c5"><rect x="334.500" y="719" width="26" height="18"/><rect x="365.500" y="719" width="27" height="18"/><rect x="397.500" y="719" width="27" height="18"/><rect x="429.500" y="719" width="27" height="18"/></g>
<g fill="#ece9d8" stroke="#222"><rect x="461.500" y="719.500" width="53" height="18"/><rect x="517.500" y="719.500" width="53" height="18"/><rect x="574.500" y="719.500" width="27" height="18"/><rect x="605.500" y="719.500" width="27" height="18"/></g>
<text class="s" x="347" y="733">捕捉</text><text class="s" x="379" y="733">栅格</text><text class="s" x="411" y="733">正交</text><text class="s" x="443" y="733">极轴</text><text class="s" x="488" y="733">对象捕捉</text><text class="s" x="544" y="733">对象追踪</text><text class="s" x="588" y="733">线宽</text><text class="s" x="619" y="733">模型</text>
<rect x="985" y="719" width="22" height="17" fill="#e3e0d0"/>
<path d="M990 720l6 8M996 722l-6 7" stroke="#667" stroke-width="2"/><path d="M998 723l6 12h-12z" fill="#f2e040" stroke="#8a7a20"/><path d="M998 727v4M998 733v1" stroke="#111"/>
<path d="M1014 731h8l-4 3z" fill="#111"/>
</svg>
</body></html>
